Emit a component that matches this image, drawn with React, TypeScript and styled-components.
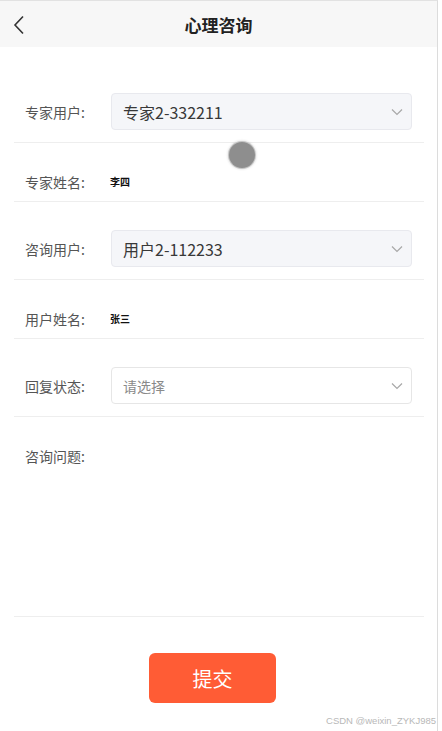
import styled, { createGlobalStyle } from "styled-components";

const GlobalStyle = createGlobalStyle`
  html, body {
    margin: 0;
    padding: 0;
    background: #fff;
    font-family: "Noto Sans CJK SC", "Noto Sans", sans-serif;
  }
`;

const Page = styled.div`
  position: relative;
  width: 438px;
  height: 731px;
  box-sizing: border-box;
  border-top: 1px solid #e2e2e2;
  border-right: 1px solid #dcdcdc;
  background: #fff;
`;

const Header = styled.header`
  height: 46px;
  background: #f7f7f7;
  display: flex;
  align-items: center;
  justify-content: center;
  position: relative;
`;

const BackButton = styled.button`
  position: absolute;
  left: 8px;
  top: 12px;
  width: 22px;
  height: 24px;
  padding: 0;
  border: none;
  background: none;
  display: flex;
  align-items: center;
  justify-content: center;
`;

const Title = styled.h1`
  margin: 0;
  font-size: 17px;
  font-weight: 700;
  color: #222;
`;

const Form = styled.form`
  padding: 18px 13px 0 14px;
`;

const Row = styled.div<{ $kind: "select" | "text" | "area" }>`
  display: flex;
  align-items: ${(p) => (p.$kind === "area" ? "flex-start" : "center")};
  padding: ${(p) =>
    p.$kind === "area" ? "29px 11px 0" : p.$kind === "text" ? "29px 12px 9px 11px" : "28px 12px 12px 11px"};
  min-height: ${(p) => (p.$kind === "area" ? "200px" : "0")};
  box-sizing: border-box;
  border-bottom: 1px solid #eeeeee;
`;

const Label = styled.label`
  width: 86px;
  flex-shrink: 0;
  font-size: 14px;
  line-height: 20px;
  color: #555;
`;

const Value = styled.span`
  font-size: 10px;
  font-weight: 700;
  color: #111;
  line-height: 18px;
  margin-left: -1px;
`;

const Select = styled.div<{ $empty?: boolean }>`
  flex: 1;
  height: 37px;
  box-sizing: border-box;
  display: flex;
  align-items: center;
  justify-content: space-between;
  padding: 0 8px 0 11px;
  border: 1px solid ${(p) => (p.$empty ? "#e6e6e6" : "#e8e9ee")};
  border-radius: 4px;
  background: ${(p) => (p.$empty ? "#fff" : "#f5f6f9")};
  font-size: ${(p) => (p.$empty ? "14px" : "16px")};
  color: ${(p) => (p.$empty ? "#8a8a8a" : "#383838")};
`;

const ButtonBar = styled.div`
  padding: 36px 0 0 135px;
`;

const Submit = styled.button`
  width: 127px;
  height: 50px;
  border: none;
  border-radius: 6px;
  background: #ff5c35;
  color: #fff;
  font-family: inherit;
  font-size: 20px;
`;

const Dot = styled.div`
  position: absolute;
  left: 229px;
  top: 141px;
  width: 26px;
  height: 26px;
  border-radius: 50%;
  background: #8e8e8e;
  box-shadow: 0 0 0 1px #c4c4c4, 0 0 2px 2px rgba(0, 0, 0, 0.08);
`;

const Watermark = styled.div`
  position: absolute;
  right: 1px;
  bottom: 5px;
  font-family: "Liberation Sans", Arial, sans-serif;
  font-size: 9.5px;
  color: #b8b8b8;
`;

const Chevron = () => (
  <svg width="12" height="8" viewBox="0 0 12 8" fill="none">
    <path d="M1 1.5 L6 6.5 L11 1.5" stroke="#a8a8a8" strokeWidth="1.2" />
  </svg>
);

const fields: { label: string; kind: "select" | "text"; value: string; placeholder?: string }[] = [
  { label: "专家用户:", kind: "select", value: "专家2-332211" },
  { label: "专家姓名:", kind: "text", value: "李四" },
  { label: "咨询用户:", kind: "select", value: "用户2-112233" },
  { label: "用户姓名:", kind: "text", value: "张三" },
  { label: "回复状态:", kind: "select", value: "", placeholder: "请选择" },
];

export default function App() {
  return (
    <Page>
      <GlobalStyle />
      <Header>
        <BackButton type="button" aria-label="返回">
          <svg width="12" height="20" viewBox="0 0 12 20" fill="none">
            <path d="M10 1.5 L2 10 L10 18.5" stroke="#333" strokeWidth="1.6" />
          </svg>
        </BackButton>
        <Title>心理咨询</Title>
      </Header>
      <Form onSubmit={(e) => e.preventDefault()}>
        {fields.map((f) => (
          <Row key={f.label} $kind={f.kind}>
            <Label>{f.label}</Label>
            {f.kind === "select" ? (
              <Select $empty={!f.value}>
                <span>{f.value || f.placeholder}</span>
                <Chevron />
              </Select>
            ) : (
              <Value>{f.value}</Value>
            )}
          </Row>
        ))}
        <Row $kind="area">
          <Label>咨询问题:</Label>
        </Row>
        <ButtonBar>
          <Submit type="submit">提交</Submit>
        </ButtonBar>
      </Form>
      <Dot />
      <Watermark>CSDN @weixin_ZYKJ985</Watermark>
    </Page>
  );
}
